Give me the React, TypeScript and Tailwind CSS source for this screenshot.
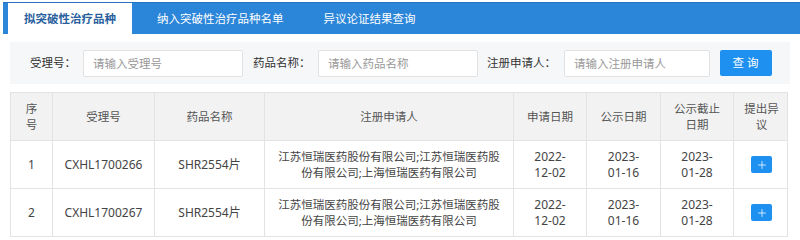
import { Plus } from 'lucide-react';

const font = { fontFamily: '"Noto Sans", "Noto Sans CJK SC", sans-serif' };

const tabs = ['拟突破性治疗品种', '纳入突破性治疗品种名单', '异议论证结果查询'];

const rows = [
  { no: '1', code: 'CXHL1700266', name: 'SHR2554片' },
  { no: '2', code: 'CXHL1700267', name: 'SHR2554片' },
];

const cols = ['w-[42px]', 'w-[102px]', 'w-[110px]', 'w-[249px]', 'w-[73px]', 'w-[74px]', 'w-[73px]', 'w-[55px]'];

function Cell({ className = '', children }: { className?: string; children: React.ReactNode }) {
  return (
    <div className={`flex shrink-0 items-center justify-center border-r border-[#e3e3e3] text-center leading-[16px] last:border-r-0 ${className}`}>
      {children}
    </div>
  );
}

export default function App() {
  return (
    <div className="h-[240px] w-[800px] overflow-hidden bg-white pl-[3px] pt-[2px] text-[11.5px]" style={font}>
      {/* Tabs */}
      <div className="flex h-[32px] border-t border-[#2472c0] bg-[#2b85d8] pl-[5px]">
        {tabs.map((t, i) => (
          <div
            key={t}
            className={`flex h-full items-center text-[11.5px] ${
              i === 0 ? 'w-[124px] justify-center bg-white font-bold text-[#2a5f9e]' : 'px-[20px] text-white'
            } ${i === 1 ? 'pl-[25px]' : ''}`}
          >
            {t}
          </div>
        ))}
      </div>

      <div className="pl-[7px] pr-[10px]">
        {/* Filters */}
        <div className="mt-[8px] flex h-[42px] items-center bg-[#f6f7f9] pl-[20px] text-[#333]">
          <span className="w-[53px]">受理号：</span>
          <input
            className="h-[27px] w-[160px] rounded-[2px] border border-[#e2e2e2] bg-white px-[9px] text-[11.5px] outline-none placeholder:text-[#999]"
            placeholder="请输入受理号"
          />
          <span className="ml-[10px] w-[65px]">药品名称：</span>
          <input
            className="h-[27px] w-[160px] rounded-[2px] border border-[#e2e2e2] bg-white px-[9px] text-[11.5px] outline-none placeholder:text-[#999]"
            placeholder="请输入药品名称"
          />
          <span className="ml-[9px] w-[77px]">注册申请人：</span>
          <input
            className="h-[27px] w-[146px] rounded-[2px] border border-[#e2e2e2] bg-white px-[9px] text-[11.5px] outline-none placeholder:text-[#999]"
            placeholder="请输入注册申请人"
          />
          <button className="ml-[10px] h-[26px] w-[52px] rounded-[2px] bg-[#1e90ef] pl-[2px] text-[11.5px] tracking-[3px] text-white">
            查询
          </button>
        </div>

        {/* Table */}
        <div className="mt-[8px] w-[778px] border border-[#e3e3e3] text-[#444]">
          <div className="flex h-[47px] bg-[#f2f2f2] text-[#555]">
            {['序号', '受理号', '药品名称', '注册申请人', '申请日期', '公示日期', '公示截止日期', '提出异议'].map((h, i) => (
              <Cell key={h} className={`${cols[i]} ${i === 0 ? 'px-[10px]' : 'px-[8px]'}`}>
                {h}
              </Cell>
            ))}
          </div>
          {rows.map((r) => (
            <div key={r.no} className="flex h-[48px] border-t border-[#e3e3e3]">
              <Cell className={`${cols[0]} text-[12px]`}>{r.no}</Cell>
              <Cell className={`${cols[1]} text-[12px]`}>{r.code}</Cell>
              <Cell className={`${cols[2]} text-[12px]`}>{r.name}</Cell>
              <Cell className={`${cols[3]} px-[9px]`}>江苏恒瑞医药股份有限公司;江苏恒瑞医药股份有限公司;上海恒瑞医药有限公司</Cell>
              <Cell className={`${cols[4]} px-[16px] text-[12px]`}>2022-12-02</Cell>
              <Cell className={`${cols[5]} px-[16px] text-[12px]`}>2023-01-16</Cell>
              <Cell className={`${cols[6]} px-[16px] text-[12px]`}>2023-01-28</Cell>
              <Cell className={cols[7]}>
                <span className="flex h-[17px] w-[21px] items-center justify-center rounded-[2px] bg-[#1e90ef] text-white">
                  <Plus size={12} strokeWidth={1.5} />
                </span>
              </Cell>
            </div>
          ))}
        </div>
      </div>
    </div>
  );
}
